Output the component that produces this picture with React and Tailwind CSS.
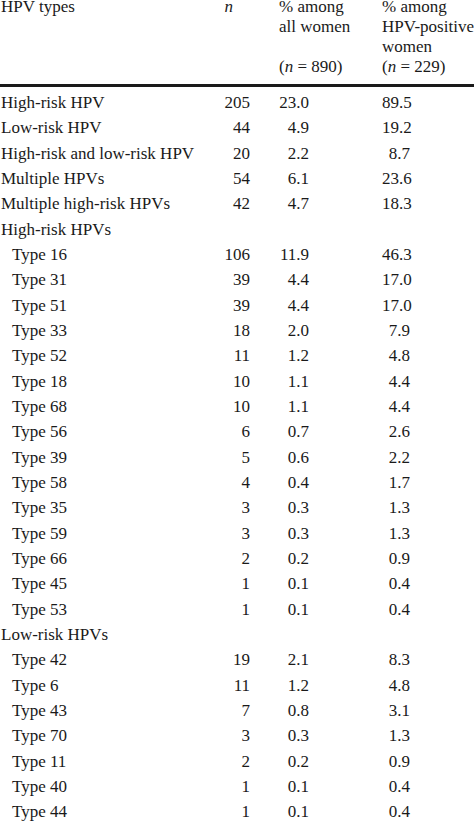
import React from "react";

const rows = [
  ["High-risk HPV", "205", "23.0", "89.5"],
  ["Low-risk HPV", "44", "4.9", "19.2"],
  ["High-risk and low-risk HPV", "20", "2.2", "8.7"],
  ["Multiple HPVs", "54", "6.1", "23.6"],
  ["Multiple high-risk HPVs", "42", "4.7", "18.3"],
  ["High-risk HPVs"],
  ["Type 16", "106", "11.9", "46.3", true],
  ["Type 31", "39", "4.4", "17.0", true],
  ["Type 51", "39", "4.4", "17.0", true],
  ["Type 33", "18", "2.0", "7.9", true],
  ["Type 52", "11", "1.2", "4.8", true],
  ["Type 18", "10", "1.1", "4.4", true],
  ["Type 68", "10", "1.1", "4.4", true],
  ["Type 56", "6", "0.7", "2.6", true],
  ["Type 39", "5", "0.6", "2.2", true],
  ["Type 58", "4", "0.4", "1.7", true],
  ["Type 35", "3", "0.3", "1.3", true],
  ["Type 59", "3", "0.3", "1.3", true],
  ["Type 66", "2", "0.2", "0.9", true],
  ["Type 45", "1", "0.1", "0.4", true],
  ["Type 53", "1", "0.1", "0.4", true],
  ["Low-risk HPVs"],
  ["Type 42", "19", "2.1", "8.3", true],
  ["Type 6", "11", "1.2", "4.8", true],
  ["Type 43", "7", "0.8", "3.1", true],
  ["Type 70", "3", "0.3", "1.3", true],
  ["Type 11", "2", "0.2", "0.9", true],
  ["Type 40", "1", "0.1", "0.4", true],
  ["Type 44", "1", "0.1", "0.4", true],
];

export default function App() {
  return (
    <div
      className="w-[474px] h-[822px] overflow-hidden bg-white text-[#1a1a1a] text-[17px]"
      style={{ fontFamily: '"Liberation Serif", "Times New Roman", serif' }}
    >
      <div className="mt-[-3.5px] flex leading-[20.33px] pb-[5.7px]">
        <div className="w-[210px] pl-px whitespace-nowrap">HPV types</div>
        <div className="w-[23px] text-right italic">n</div>
        <div className="w-[46px]" />
        <div className="w-[103px] whitespace-nowrap">
          <div>% among</div>
          <div>all women</div>
          <div>&nbsp;</div>
          <div>
            (<span className="italic">n</span> = 890)
          </div>
        </div>
        <div className="flex-1 whitespace-nowrap">
          <div>% among</div>
          <div>HPV-positive</div>
          <div>women</div>
          <div>
            (<span className="italic">n</span> = 229)
          </div>
        </div>
      </div>
      <div className="h-[3px] bg-[#1a1a1a]" />
      <div className="mt-[3.5px] leading-[25.33px]">
        {rows.map((r, i) => (
          <div key={i} className="flex h-[25.33px] whitespace-nowrap">
            <div className={"w-[210px] " + (r[4] ? "pl-[12px]" : "pl-px")}>{r[0]}</div>
            <div className="w-[40px] text-right">{r[1] || ""}</div>
            <div className="w-[29px]" />
            <div className="w-[30px] text-right">{r[2] || ""}</div>
            <div className="w-[73px]" />
            <div className="w-[28px] text-right">{r[3] || ""}</div>
          </div>
        ))}
      </div>
    </div>
  );
}
